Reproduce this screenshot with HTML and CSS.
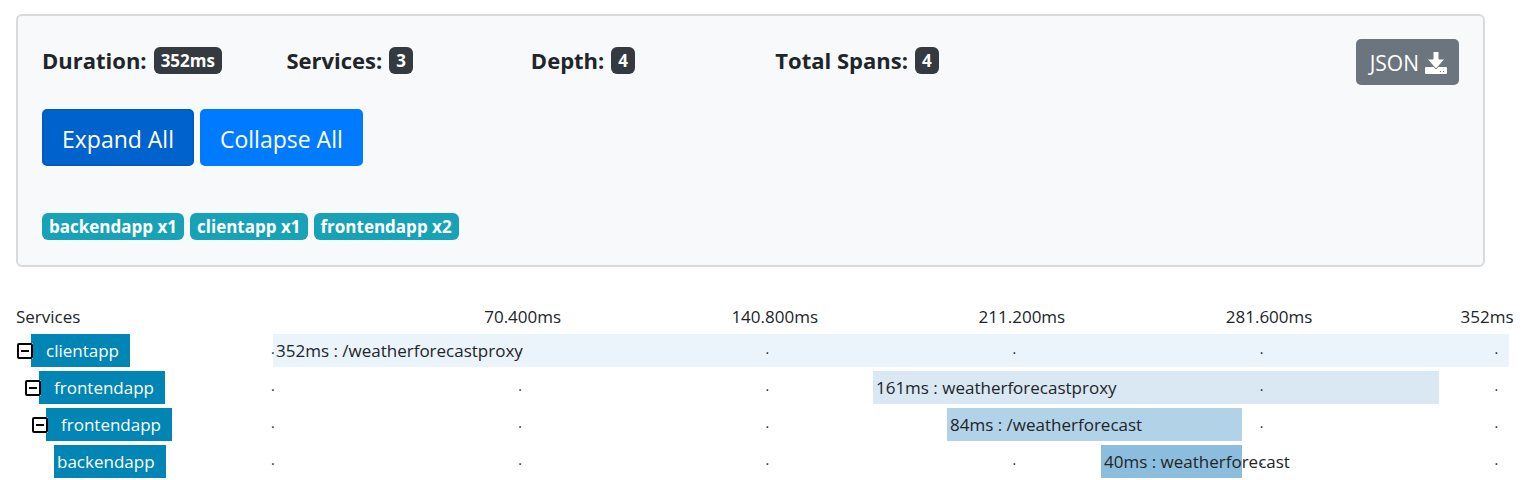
FILE: index.html
```html
<!DOCTYPE html>
<html lang="en">
<head>
    <meta charset="UTF-8">
    <meta name="viewport" content="width=device-width, initial-scale=1.0">
    <title>Trace</title>
    <link rel="stylesheet" href="styles.css">
</head>
<body>
    <section class="summary">
        <div class="summary-top">
            <div class="stats">
                <div class="stat">Duration: <span class="badge badge-dark">352ms</span></div>
                <div class="stat">Services: <span class="badge badge-dark">3</span></div>
                <div class="stat">Depth: <span class="badge badge-dark">4</span></div>
                <div class="stat">Total Spans: <span class="badge badge-dark">4</span></div>
            </div>
            <button type="button" class="btn btn-json">JSON
                <svg class="icon-download" viewBox="0 0 22 22" aria-hidden="true">
                    <path fill="#fff" d="M1 15h20q1 0 1 1v5q0 1-1 1H1q-1 0-1-1v-5q0-1 1-1z"/>
                    <path fill="#fff" stroke="#6c757d" d="M8-1h6v8h6l-9 10-9-10h6z"/>
                    <path fill="#6c757d" d="M15 19h1v1h-1zM18 19h1v1h-1z"/>
                </svg>
            </button>
        </div>

        <div class="actions">
            <button type="button" class="btn btn-primary active">Expand All</button>
            <button type="button" class="btn btn-primary">Collapse All</button>
        </div>

        <div class="services">
            <span class="badge badge-info">backendapp x1</span>
            <span class="badge badge-info">clientapp x1</span>
            <span class="badge badge-info">frontendapp x2</span>
        </div>
    </section>

    <section class="timeline">
        <div class="row row-head">
            <div class="service">Services</div>
            <div class="ticks tick-labels">
                <span></span><span>70.400ms</span><span>140.800ms</span><span>211.200ms</span><span>281.600ms</span><span>352ms</span>
            </div>
        </div>

        <div class="row">
            <div class="service">
                <button type="button" class="toggle" aria-label="Collapse clientapp">
                    <svg viewBox="0 0 16 16"><rect x="1" y="1" width="14" height="14" rx="1"/><path d="M4 8h8"/></svg>
                </button>
                <span class="name">clientapp</span>
            </div>
            <div class="track">
                <div class="bar bar-1" style="margin-left: 0%; width: 100%">352ms : /weatherforecastproxy</div>
                <div class="ticks dots"><span>.</span><span>.</span><span>.</span><span>.</span><span>.</span><span>.</span></div>
            </div>
        </div>

        <div class="row depth-2">
            <div class="service">
                <button type="button" class="toggle" aria-label="Collapse frontendapp">
                    <svg viewBox="0 0 16 16"><rect x="1" y="1" width="14" height="14" rx="1"/><path d="M4 8h8"/></svg>
                </button>
                <span class="name">frontendapp</span>
            </div>
            <div class="track">
                <div class="bar bar-2" style="margin-left: 48.54%; width: 45.8%">161ms : weatherforecastproxy</div>
                <div class="ticks dots"><span>.</span><span>.</span><span>.</span><span>.</span><span>.</span><span>.</span></div>
            </div>
        </div>

        <div class="row depth-3">
            <div class="service">
                <button type="button" class="toggle" aria-label="Collapse frontendapp">
                    <svg viewBox="0 0 16 16"><rect x="1" y="1" width="14" height="14" rx="1"/><path d="M4 8h8"/></svg>
                </button>
                <span class="name">frontendapp</span>
            </div>
            <div class="track">
                <div class="bar bar-3" style="margin-left: 54.53%; width: 23.87%">84ms : /weatherforecast</div>
                <div class="ticks dots"><span>.</span><span>.</span><span>.</span><span></span><span>.</span><span>.</span></div>
            </div>
        </div>

        <div class="row depth-4">
            <div class="service">
                <span class="name name-leaf">backendapp</span>
            </div>
            <div class="track">
                <div class="bar bar-4" style="margin-left: 66.99%; width: 11.41%">40ms : weatherforecast</div>
                <div class="ticks dots"><span>.</span><span>.</span><span>.</span><span>.</span><span>.</span><span>.</span></div>
            </div>
        </div>
    </section>
</body>
</html>
```
FILE: styles.css
```css
* {
    box-sizing: border-box;
}

body {
    margin: 0;
    padding: 14px 23px 0 16px;
    background-color: #fff;
    color: #212529;
    font-family: 'Segoe UI', 'Open Sans', 'Noto Sans', sans-serif;
    font-size: 17px;
}

/* Summary */
.summary {
    margin-right: 24px;
    padding: 23px 24px 25px;
    border: 2px solid #d9dadc;
    border-radius: 6px;
    background-color: #f8f9fa;
}

.summary-top {
    display: flex;
    justify-content: space-between;
    align-items: flex-start;
}

.stats {
    display: grid;
    grid-template-columns: repeat(4, 1fr);
    width: 69%;
    padding-top: 5px;
}

.stat {
    display: flex;
    align-items: center;
    gap: 7px;
    font-size: 22px;
    font-weight: 700;
    line-height: 32px;
    white-space: nowrap;
}

.badge {
    padding: 0 7px;
    border-radius: 6px;
    color: #fff;
    font-size: 17px;
    font-weight: 700;
    line-height: 27px;
}

.badge-dark {
    background-color: #343a40;
}

.badge-info {
    background-color: #17a2b8;
}

.btn {
    border: 0;
    border-radius: 5px;
    color: #fff;
    font-family: inherit;
    cursor: pointer;
}

.btn-json {
    display: flex;
    align-items: center;
    gap: 6px;
    height: 46px;
    padding: 2px 12px 0 14px;
    background-color: #6c757d;
    font-size: 21px;
}

.icon-download {
    width: 22px;
    height: 22px;
}

.actions {
    display: flex;
    gap: 6px;
    margin-top: 24px;
}

.btn-primary {
    height: 57px;
    padding: 2px 20px 0;
    background-color: #007bff;
    font-size: 23px;
}

.btn-primary.active {
    border: 2px solid #005cbf;
    padding: 2px 18px 0;
    background-color: #0062cc;
}

.services {
    display: flex;
    gap: 6px;
    margin-top: 47px;
}

/* Timeline */
.timeline {
    display: grid;
    gap: 4px;
    margin-top: 37px;
}

.row {
    display: grid;
    grid-template-columns: 257px 1fr;
    line-height: 33px;
}

.row-head {
    line-height: 26px;
}

.service {
    display: flex;
    align-items: center;
}

.depth-2 .service {
    padding-left: 8px;
}

.depth-3 .service {
    padding-left: 15px;
}

.depth-4 .service {
    padding-left: 38px;
}

.toggle {
    z-index: 1;
    display: flex;
    margin: 0 -2px 0 1px;
    padding: 0;
    border: 0;
    background-color: #fff;
    cursor: pointer;
}

.toggle svg {
    width: 16px;
    height: 16px;
    fill: none;
    stroke: #000;
    stroke-width: 2;
}

.name {
    padding: 0 11px 0 15px;
    background-color: #0085b5;
    color: #fff;
}

.name-leaf {
    padding-left: 3px;
}

.track {
    display: grid;
}

.bar,
.dots {
    grid-area: 1 / 1;
}

.bar {
    padding-left: 3px;
    white-space: nowrap;
}

.bar-1 {
    background-color: #ebf3fb;
}

.bar-2 {
    background-color: #d9e8f3;
}

.bar-3 {
    background-color: #b2d2e8;
}

.bar-4 {
    background-color: #8dbddd;
}

.ticks {
    display: grid;
    grid-template-columns: 20% 20% 20% 20% 19% 1%;
}

.tick-labels {
    margin-left: -36px;
    margin-right: 36px;
    white-space: nowrap;
}

.dots {
    margin-left: -2px;
    margin-right: 2px;
    font-size: 14px;
    line-height: 30px;
}
```
